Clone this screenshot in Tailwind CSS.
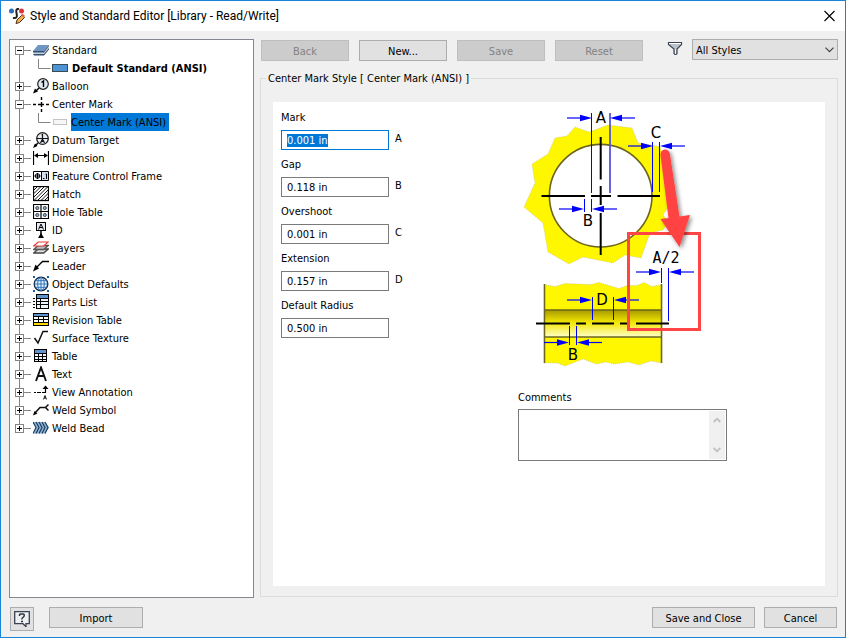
<!DOCTYPE html>
<html lang="en">
<head>
  <meta charset="UTF-8">
  <meta name="viewport" content="width=device-width, initial-scale=1.0">
  <title>Style and Standard Editor</title>
  <script src="https://cdn.jsdelivr.net/npm/@tailwindcss/browser@4"></script>
</head>
<body class="flex flex-col min-h-screen border border-[#1883d7] bg-[#f0f0f0] font-['DejaVu_Sans_Condensed','DejaVu_Sans',sans-serif] text-[11px] leading-4 text-black">

  <!-- Shared shapes -->
  <svg class="hidden">
    <symbol id="minus" viewBox="0 0 23 18">
      <path d="M14 9.500h7" stroke="#848484"/>
      <rect x="5.500" y="5.500" width="8" height="8" fill="#fff" stroke="#848484"/>
      <path d="M7 9.500h5" stroke="#000"/>
    </symbol>
    <symbol id="plus" viewBox="0 0 23 18">
      <path d="M9.500 0v18M14 9.500h7" stroke="#848484"/>
      <rect x="5.500" y="5.500" width="8" height="8" fill="#fff" stroke="#848484"/>
      <path d="M7 9.500h5M9.500 7v5" stroke="#000"/>
    </symbol>
    <symbol id="plus-last" viewBox="0 0 23 18">
      <path d="M9.500 0v6M14 9.500h7" stroke="#848484"/>
      <rect x="5.500" y="5.500" width="8" height="8" fill="#fff" stroke="#848484"/>
      <path d="M7 9.500h5M9.500 7v5" stroke="#000"/>
    </symbol>
    <symbol id="elbow" viewBox="0 0 42 18">
      <path d="M9.500 0v18M28.500 0v9.500h12" fill="none" stroke="#848484"/>
    </symbol>
    <!-- arrow heads with their tails, tip at 0,0 -->
    <symbol id="arrow-r" viewBox="-25 -4 25 8" overflow="visible">
      <path d="M-25 0h14" stroke="#00f" stroke-width="1.200"/>
      <path d="M0 0l-12 -3.200v6.400z" fill="#00f"/>
    </symbol>
    <symbol id="arrow-l" viewBox="0 -4 25 8" overflow="visible">
      <path d="M25 0h-14" stroke="#00f" stroke-width="1.200"/>
      <path d="M0 0l12 -3.200v6.400z" fill="#00f"/>
    </symbol>
  </svg>

  <!-- Title bar -->
  <header class="flex items-center h-[30px] pl-2 pr-[9px] bg-white">
    <svg class="w-4 h-4 mr-[5px]" viewBox="0 0 16 16">
      <circle cx="2.500" cy="3" r="2.500" fill="#2a6fb5"/>
      <circle cx="12.500" cy="3" r="2.500" fill="#d9363e"/>
      <path d="M10 1C7.500 .5 6.800 2 7.500 5s1 5.500-3.500 5" fill="none" stroke="#222" stroke-width="2"/>
      <path d="M7 15.500l1-3.500 5-5 2.500 2.500-5 5z" fill="#f4b04a" stroke="#4a2c12"/>
      <path d="M12 7l1.500-1.500 2.500 2.500-1.500 1.500z" fill="#d86a50"/>
    </svg>
    <h1 class="font-['Roboto',sans-serif] text-[12px]">Style and Standard Editor [Library - Read/Write]</h1>
    <button type="button" aria-label="Close" class="ml-auto">
      <svg class="w-[13px] h-[13px]" viewBox="0 0 13 13"><path d="M1.500 1l10 10M11.500 1l-10 10" stroke="#000" stroke-width="1.100"/></svg>
    </button>
  </header>

  <main class="flex grow gap-[6px] pt-2 pl-2 pr-[7px]">
    <!-- Style tree -->
    <nav class="w-[245px] shrink-0 pt-px border border-[#828790] bg-white">
      <ul class="[&_span]:pt-0.5">
        <li>
          <div class="flex items-center h-[18px]">
            <svg class="w-[23px] h-[18px]"><path d="M9.500 13v5" stroke="#848484"/><use href="#minus"/></svg>
            <svg class="w-4 h-4 mr-[3px]" viewBox="0 0 16 16">
              <path d="M0 9l5-6h11l-5 6z" fill="#6d96c4"/>
              <path d="M0 9h11l5-6v3l-5 7H1z" fill="#c9d3de"/>
              <path d="M11 9l5-6v1l-5 6.500H0V9zM0 12h11l5-6v1.500L11 13.500H1z" fill="#33506f"/>
            </svg>
            <span>Standard</span>
          </div>
          <ul>
            <li class="flex items-center h-[18px]">
              <svg class="w-[42px] h-[18px]"><use href="#elbow"/></svg>
              <svg class="w-4 h-4 mr-[4px]" viewBox="0 0 16 16"><rect x=".5" y="4.500" width="15" height="7" fill="#4d94d6" stroke="#3a4a50"/></svg>
              <span class="font-bold">Default Standard (ANSI)</span>
            </li>
          </ul>
        </li>
        <li class="flex items-center h-[18px]">
          <svg class="w-[23px] h-[18px]"><use href="#plus"/></svg>
          <svg class="w-4 h-4 mr-[3px]" viewBox="0 0 16 16">
            <circle cx="10" cy="6" r="5.300" fill="#dfe9f3" stroke="#222" stroke-width="1.200"/>
            <path d="M8.500 4.500L10.500 3v6" fill="none" stroke="#000" stroke-width="1.400"/>
            <path d="M6 10l-3 3" stroke="#000" stroke-width="1.400"/><path d="M0 15.500l2-5 3 3z"/>
          </svg>
          <span>Balloon</span>
        </li>
        <li>
          <div class="flex items-center h-[18px]">
            <svg class="w-[23px] h-[18px]"><path d="M9.500 0v18" stroke="#848484"/><use href="#minus"/></svg>
            <svg class="w-4 h-4 mr-[3px]" viewBox="0 0 16 16"><path d="M0 8.500h3M5 8.500h6M13 8.500h3M8.500 1v3M8.500 6v5M8.500 13v3" stroke="#000" stroke-width="1.400"/></svg>
            <span>Center Mark</span>
          </div>
          <ul>
            <li class="flex items-center h-[18px]">
              <svg class="w-[42px] h-[18px]"><use href="#elbow"/></svg>
              <svg class="w-4 h-4 mr-[3px]" viewBox="0 0 16 16"><rect x="1.500" y="5.500" width="13" height="5" fill="#f6f6f6" stroke="#c4c4c4"/></svg>
              <span class="pr-[3px] bg-[#0078d7]">Center Mark (ANSI)</span>
            </li>
          </ul>
        </li>
        <li class="flex items-center h-[18px]">
          <svg class="w-[23px] h-[18px]"><use href="#plus"/></svg>
          <svg class="w-4 h-4 mr-[3px]" viewBox="0 0 16 16">
            <circle cx="9.500" cy="6.500" r="5.800" fill="#e8eef4" stroke="#222" stroke-width="1.300"/>
            <path d="M4 6.500h11M8.500 3l1-.5v4M7.500 11l2-4 2 4M8 9.500h3" fill="none" stroke="#111" stroke-width="1.200"/>
            <path d="M5 11l-3 3" stroke="#000" stroke-width="1.400"/><path d="M0 16l2-4.500 2.500 2.500z"/>
          </svg>
          <span>Datum Target</span>
        </li>
        <li class="flex items-center h-[18px]">
          <svg class="w-[23px] h-[18px]"><use href="#plus"/></svg>
          <svg class="w-4 h-4 mr-[3px]" viewBox="0 0 16 16"><path d="M.5 1v14M15.500 1v14M2 5.500h12" stroke="#000" stroke-width="1.200"/><path d="M1 5.500l4-2.500v5zM15 5.500l-4-2.500v5z"/></svg>
          <span>Dimension</span>
        </li>
        <li class="flex items-center h-[18px]">
          <svg class="w-[23px] h-[18px]"><use href="#plus"/></svg>
          <svg class="w-4 h-4 mr-[3px]" viewBox="0 0 16 16">
            <path d="M.5 3.500h15v9H.5zM8.500 3.500v9" fill="#fff" stroke="#000"/>
            <path d="M9 4h6v8H9z" fill="#cfe0f2"/>
            <circle cx="4.500" cy="8" r="2.300" fill="none" stroke="#000"/><path d="M1.500 8h6M4.500 5v6M10 10.500h1.500M12.500 6h1v5" fill="none" stroke="#000"/>
          </svg>
          <span>Feature Control Frame</span>
        </li>
        <li class="flex items-center h-[18px]">
          <svg class="w-[23px] h-[18px]"><use href="#plus"/></svg>
          <svg class="w-4 h-4 mr-[3px]" viewBox="0 0 16 16"><rect x=".5" y=".5" width="15" height="14" fill="#fff" stroke="#000" stroke-width="1.300"/><path d="M1 4l3.500-3.500M1 7.500l7-7M1 11l10.500-10.500M1 14.500l14-14M4.500 14.500L15.500 3.500M8 14.500L15.500 7M11.500 14.500l4-4" stroke="#111"/></svg>
          <span>Hatch</span>
        </li>
        <li class="flex items-center h-[18px]">
          <svg class="w-[23px] h-[18px]"><use href="#plus"/></svg>
          <svg class="w-4 h-4 mr-[3px]" viewBox="0 0 16 16">
            <path d="M.5 .5h15v14H.5zM8 .5v14M.5 7.500h15" fill="#fff" stroke="#000" stroke-width="1.200"/>
            <g fill="#7ea6d0" stroke="#333" stroke-width=".8"><circle cx="4.300" cy="4" r="1.600"/><circle cx="11.800" cy="4" r="1.600"/><circle cx="4.300" cy="11" r="1.600"/><circle cx="11.800" cy="11" r="1.600"/></g>
          </svg>
          <span>Hole Table</span>
        </li>
        <li class="flex items-center h-[18px]">
          <svg class="w-[23px] h-[18px]"><use href="#plus"/></svg>
          <svg class="w-4 h-4 mr-[3px]" viewBox="0 0 16 16">
            <rect x="3.500" y=".5" width="9" height="8" fill="#e4eaf2" stroke="#000"/>
            <path d="M5.500 7.500L8 2l2.500 5.500M6.500 5.500h3" fill="none" stroke="#000"/>
            <path d="M8 9v4" stroke="#000" stroke-width="1.500"/><path d="M8 11l3 5H5z"/>
          </svg>
          <span>ID</span>
        </li>
        <li class="flex items-center h-[18px]">
          <svg class="w-[23px] h-[18px]"><use href="#plus"/></svg>
          <svg class="w-4 h-4 mr-[3px]" viewBox="0 0 16 16">
            <path d="M.7 13l4.500-4h10l-4.500 4z" fill="#ddd" stroke="#444" stroke-width="1.300"/>
            <path d="M.7 9.500l4.500-4h10l-4.500 4z" fill="#bbb" stroke="#555" stroke-width="1.300"/>
            <path d="M.7 6l4.500-4h10l-4.500 4z" fill="#fff" stroke="#ee3a3a" stroke-width="1.200"/>
          </svg>
          <span>Layers</span>
        </li>
        <li class="flex items-center h-[18px]">
          <svg class="w-[23px] h-[18px]"><use href="#plus"/></svg>
          <svg class="w-4 h-4 mr-[3px]" viewBox="0 0 16 16"><path d="M16 3.500H9.500l-6 6" fill="none" stroke="#000" stroke-width="1.300"/><path d="M0 13.500l2.500-7L6 10.500z"/></svg>
          <span>Leader</span>
        </li>
        <li class="flex items-center h-[18px]">
          <svg class="w-[23px] h-[18px]"><use href="#plus"/></svg>
          <svg class="w-4 h-4 mr-[3px]" viewBox="0 0 16 16">
            <circle cx="8" cy="8" r="6.800" fill="#eaf3fc" stroke="#1a2f4b" stroke-width="1.400"/>
            <path d="M8 1.500v13M1.500 8h13M2.500 4.700h11M2.500 11.300h11" stroke="#2c74bd"/>
            <ellipse cx="8" cy="8" rx="3.300" ry="6.500" fill="none" stroke="#2c74bd"/>
            <path d="M0 0h2v2H0zM14 0h2v2h-2zM0 14h2v2H0zM14 14h2v2h-2z" fill="#1c60ab"/>
          </svg>
          <span>Object Defaults</span>
        </li>
        <li class="flex items-center h-[18px]">
          <svg class="w-[23px] h-[18px]"><use href="#plus"/></svg>
          <svg class="w-4 h-4 mr-[3px]" viewBox="0 0 16 16">
            <rect x="3.500" y=".5" width="12" height="14" fill="#eef4fb" stroke="#000"/><path d="M4 1h11v3H4z" fill="#5d93cf"/>
            <path d="M3.500 4.500h12M3.500 7.500h12M3.500 10.500h12M7.500 4v11" stroke="#000"/>
            <path d="M0 4.500h2M0 7.500h2M0 10.500h2M0 13.500h2" stroke="#000"/>
          </svg>
          <span>Parts List</span>
        </li>
        <li class="flex items-center h-[18px]">
          <svg class="w-[23px] h-[18px]"><use href="#plus"/></svg>
          <svg class="w-4 h-4 mr-[3px]" viewBox="0 0 16 16">
            <rect x=".5" y="1.500" width="15" height="12" fill="#fff" stroke="#000"/><path d="M1 2h14v2H1z" fill="#5d93cf"/><path d="M1 11h14v2H1z" fill="#ffd800"/>
            <path d="M0 4.500h16M0 7.500h16M0 10.500h16M5.500 4v7M10.500 4v7" stroke="#000"/>
          </svg>
          <span>Revision Table</span>
        </li>
        <li class="flex items-center h-[18px]">
          <svg class="w-[23px] h-[18px]"><use href="#plus"/></svg>
          <svg class="w-4 h-4 mr-[3px]" viewBox="0 0 16 16"><path d="M1.500 8l3.500 5 5-11.500h5" fill="none" stroke="#111" stroke-width="1.500"/></svg>
          <span>Surface Texture</span>
        </li>
        <li class="flex items-center h-[18px]">
          <svg class="w-[23px] h-[18px]"><use href="#plus"/></svg>
          <svg class="w-4 h-4 mr-[3px]" viewBox="0 0 16 16">
            <rect x="1.500" y="1.500" width="12" height="12" fill="#eef4fb" stroke="#000"/><path d="M2 2h11v3H2z" fill="#5d93cf"/>
            <path d="M1.500 5.500h12M1.500 8.500h12M1.500 11.500h12M5.500 5v9M9.500 5v9" stroke="#000"/>
          </svg>
          <span>Table</span>
        </li>
        <li class="flex items-center h-[18px]">
          <svg class="w-[23px] h-[18px]"><use href="#plus"/></svg>
          <svg class="w-4 h-4 mr-[3px]" viewBox="0 0 16 16"><path d="M3 15L8 1.500 13 15M5 10h6" fill="none" stroke="#111" stroke-width="1.900"/></svg>
          <span>Text</span>
        </li>
        <li class="flex items-center h-[18px]">
          <svg class="w-[23px] h-[18px]"><use href="#plus"/></svg>
          <svg class="w-4 h-4 mr-[3px]" viewBox="0 0 16 16"><path d="M1 8.500h2M4 8.500h4M9 8.500h3.500V4" fill="none" stroke="#000" stroke-width="1.200"/><path d="M9.500 5l3-3.500 3 3.500z"/><path d="M10.500 15.500l1.500-4 1.500 4M11 14h2" fill="none" stroke="#000" stroke-width=".9"/></svg>
          <span>View Annotation</span>
        </li>
        <li class="flex items-center h-[18px]">
          <svg class="w-[23px] h-[18px]"><use href="#plus"/></svg>
          <svg class="w-4 h-4 mr-[3px]" viewBox="0 0 16 16"><path d="M2 11l5-5.500h5.500M15.500 2.500l-3 3 3 3" fill="none" stroke="#111" stroke-width="1.500"/><path d="M0 13.500l1.500-4.500 3 2.500z"/></svg>
          <span>Weld Symbol</span>
        </li>
        <li class="flex items-center h-[18px]">
          <svg class="w-[23px] h-[18px]"><use href="#plus-last"/></svg>
          <svg class="w-4 h-4 mr-[3px]" viewBox="0 0 16 16">
            <path d="M0 2h12l4 5.500-4 6H0l3-6z" fill="#8fb4d8"/>
            <path d="M0 2l3 5.500-3 6M3 2l3 5.500-3 6M6 2l3 5.500-3 6M9 2l3 5.500-3 6M12 2l3 5.500-3 6" fill="none" stroke="#1e3d5c" stroke-width="1.200"/>
          </svg>
          <span>Weld Bead</span>
        </li>
      </ul>
    </nav>

    <section class="flex flex-col grow min-w-0">
      <!-- Toolbar -->
      <div class="flex gap-[10px] pl-px">
        <button type="button" disabled class="w-[88px] h-[21px] mt-px pt-0.5 border border-[#bfbfbf] bg-[#ccc] text-[#838383]">Back</button>
        <button type="button" class="w-[88px] h-[21px] mt-px pt-0.5 border border-[#adadad] bg-[#e1e1e1]">New...</button>
        <button type="button" disabled class="w-[88px] h-[21px] mt-px pt-0.5 border border-[#bfbfbf] bg-[#ccc] text-[#838383]">Save</button>
        <button type="button" disabled class="w-[88px] h-[21px] mt-px pt-0.5 border border-[#bfbfbf] bg-[#ccc] text-[#838383]">Reset</button>
        <div class="flex items-start gap-[9px] ml-auto">
          <svg class="w-4 h-4 mt-px" viewBox="0 0 16 16">
            <path d="M1.500 2.500h13v2L10 9v4.500l-1 1H8l-1-1V9L1.500 4.500z" fill="#bcc2ca" stroke="#3c4350" stroke-width="1.200"/>
            <path d="M2 3h12v1H2z" fill="#fff"/><path d="M8.500 9v5" stroke="#f4f6f8"/>
          </svg>
          <div class="relative">
            <select aria-label="Style filter" class="w-[146px] h-[21px] pl-[3px] pt-0.5 appearance-none border border-[#adadad] bg-[#e1e1e1]">
              <option>All Styles</option>
            </select>
            <svg class="absolute right-1 top-2 w-[9px] h-[6px] pointer-events-none" viewBox="0 0 9 6"><path d="M.5 .7l4 4 4-4" fill="none" stroke="#444" stroke-width="1.200"/></svg>
          </div>
        </div>
      </div>

      <!-- Center mark settings -->
      <fieldset class="flex grow mt-2 mb-px px-3 pt-[15px] pb-[10px] border border-[#dcdcdc]">
        <legend class="-ml-[7px] pt-0.5 px-[2px]">Center Mark Style [ Center Mark (ANSI) ]</legend>
        <div class="flex grow pl-2 bg-white">
          <div class="flex flex-col gap-[6px] w-[237px] shrink-0 pt-2">
            <div>
              <label for="mark" class="block mb-1">Mark</label>
              <div class="flex gap-[6px]">
                <input id="mark" type="text" value="0.001 in" class="w-[108px] h-5 px-[5px] border border-[#7a7a7a] bg-white outline-none focus:border-[#0078d7] selection:bg-[#0078d7] selection:text-white">
                <span class="leading-[18px]">A</span>
              </div>
            </div>
            <div>
              <label for="gap" class="block mt-px mb-1">Gap</label>
              <div class="flex gap-[6px]">
                <input id="gap" type="text" value="0.118 in" class="w-[108px] h-5 px-[5px] border border-[#7a7a7a] bg-white outline-none focus:border-[#0078d7]">
                <span class="leading-[18px]">B</span>
              </div>
            </div>
            <div>
              <label for="overshoot" class="block mt-px mb-1">Overshoot</label>
              <div class="flex gap-[6px]">
                <input id="overshoot" type="text" value="0.001 in" class="w-[108px] h-5 px-[5px] border border-[#7a7a7a] bg-white outline-none focus:border-[#0078d7]">
                <span class="leading-[18px]">C</span>
              </div>
            </div>
            <div>
              <label for="extension" class="block mt-px mb-1">Extension</label>
              <div class="flex gap-[6px]">
                <input id="extension" type="text" value="0.157 in" class="w-[108px] h-5 px-[5px] border border-[#7a7a7a] bg-white outline-none focus:border-[#0078d7]">
                <span class="leading-[18px]">D</span>
              </div>
            </div>
            <div>
              <label for="radius" class="block mt-px mb-1">Default Radius</label>
              <input id="radius" type="text" value="0.500 in" class="w-[108px] h-5 px-[5px] border border-[#7a7a7a] bg-white outline-none focus:border-[#0078d7]">
            </div>
          </div>

          <div>
            <svg class="w-[190px] h-[287px]" viewBox="518 102 190 287" font-family="DejaVu Sans, sans-serif" font-size="15" text-anchor="middle">
              <defs>
                <linearGradient id="bore" x2="0" y2="1">
                  <stop offset="0" stop-color="#a89a00"/><stop offset=".45" stop-color="#f2e600"/><stop offset="1" stop-color="#ffffc8"/>
                </linearGradient>
                <filter id="shadow" x="-50%" y="-20%" width="200%" height="140%"><feDropShadow dx="2" dy="2" stdDeviation="2" flood-opacity=".45"/></filter>
              </defs>
              <!-- plate with hole -->
              <path d="M567 136l8-9 14 5 19-7 24 3 6 15 14 2 8 2 5 20 4 20-1 20-5 8 5 7-5 8-13 3-9 25-16-3-12 8-30-6-14 7-21-12-5-29-19-16 11-24-3-19 16-10 7-16z" fill="#fff700" stroke="#b8b890" stroke-width=".6" stroke-dasharray="1 1"/>
              <circle cx="600.700" cy="195.700" r="51.300" fill="#fff" stroke="#6b6520" stroke-width="1.600"/>
              <path d="M600.700 137v42.500M600.700 186v19M600.700 213v42M541.500 196H585M591 196h20M617.500 196H660" stroke="#000" stroke-width="2"/>
              <path d="M591.500 113v80M652.500 142v50M659.500 142v50M584.500 199v13M591.500 199v13" stroke="#00f"/>
              <path d="M610 113v80" stroke="#5555e0" stroke-width="1.800"/>
              <use href="#arrow-r" x="567" y="114" width="25" height="8"/>
              <use href="#arrow-l" x="610" y="114" width="25" height="8"/>
              <use href="#arrow-r" x="628" y="142" width="25" height="8"/>
              <use href="#arrow-l" x="660" y="142" width="25" height="8"/>
              <use href="#arrow-r" x="559" y="205" width="25" height="8"/>
              <use href="#arrow-l" x="592" y="205" width="25" height="8"/>
              <text x="601" y="123">A</text>
              <text x="656" y="138">C</text>
              <text x="588" y="226">B</text>
              <!-- side section -->
              <path d="M544 284.500l11 2 10-3 26 1 8-2 20 6 8-3 10 0 7-3 8 4 10-2V363l-11-2-12 4-11-3-14 2-8-2-10 2-13-5-18 7-8-3-13 0z" fill="#fff700" stroke="#b8b890" stroke-width=".6" stroke-dasharray="1 1"/>
              <path d="M544 310h118v27H544z" fill="url(#bore)"/>
              <path d="M544 310h118M544 337h118M544.500 284v79M661.500 284v79" stroke="#6b6520" stroke-width="1.500"/>
              <path d="M536 323.500h34M576 323.500h10M592 323.500h22M620 323.500h10M636 323.500h33" stroke="#000" stroke-width="2"/>
              <path d="M592.500 297v23M613.500 297v23M569.500 326v19M576.500 326v19M661.500 268v15M668.500 268v53" stroke="#00f"/>
              <use href="#arrow-r" x="567" y="296" width="25" height="8"/>
              <use href="#arrow-l" x="614" y="296" width="25" height="8"/>
              <use href="#arrow-r" x="544" y="338.500" width="25" height="8"/>
              <use href="#arrow-l" x="577" y="338.500" width="25" height="8"/>
              <use href="#arrow-r" x="636" y="268" width="25" height="8"/>
              <use href="#arrow-l" x="669" y="268" width="25" height="8"/>
              <text x="602" y="305">D</text>
              <text x="573" y="360">B</text>
              <text x="666" y="263" font-family="DejaVu Sans Mono, monospace">A/2</text>
              <!-- callout -->
              <rect x="628.500" y="233.500" width="71" height="96" fill="none" stroke="#ff4545" stroke-width="3"/>
              <path d="M660.500 155a4.700 4.700 0 0 1 9.300-1.500L679.500 216.500l10.500-1.500-10.500 32-19-28 8-1z" fill="#ff4343" filter="url(#shadow)"/>
            </svg>
            <label for="comments" class="block mt-px mb-[3px]">Comments</label>
            <div class="flex w-[209px] h-[52px] p-px border border-[#7a7a7a]">
              <textarea id="comments" class="grow min-w-0 resize-none overflow-hidden outline-none"></textarea>
              <div class="flex flex-col justify-between items-center w-4 py-[6px] bg-[#f0f0f0]">
                <button type="button" aria-label="Scroll up"><svg class="w-2 h-[6px]" viewBox="0 0 8 6"><path d="M.7 5L4 1.700 7.300 5" fill="none" stroke="#bfbfbf" stroke-width="1.800"/></svg></button>
                <button type="button" aria-label="Scroll down"><svg class="w-2 h-[6px]" viewBox="0 0 8 6"><path d="M.7 1L4 4.300 7.300 1" fill="none" stroke="#bfbfbf" stroke-width="1.800"/></svg></button>
              </div>
            </div>
          </div>
        </div>
      </fieldset>
    </section>
  </main>

  <!-- Dialog buttons -->
  <footer class="flex items-start pt-[9px] pb-[6px] pl-[9px] pr-2">
    <button type="button" aria-label="Help" class="flex items-center justify-center w-6 h-6 border border-[#adadad] bg-[#e1e1e1]">
      <svg class="w-4 h-4" viewBox="0 0 16 16">
        <path d="M.7 .7h14.600v12H12v3l-3-3H.7z" fill="#eef0f3" stroke="#3c4350" stroke-width="1.300"/>
        <path d="M5.500 5V4q0-1 1-1h2.500q1.300 0 1.300 1.300T9 6.300 8 8.500M7 10.500h2" fill="none" stroke="#30343c" stroke-width="1.500"/>
      </svg>
    </button>
    <button type="button" class="w-[94px] h-[21px] ml-[15px] pt-0.5 border border-[#adadad] bg-[#e1e1e1]">Import</button>
    <button type="button" class="w-[103px] h-[21px] ml-auto pt-0.5 border border-[#adadad] bg-[#e1e1e1]">Save and Close</button>
    <button type="button" class="w-[73px] h-[21px] ml-[9px] pt-0.5 border border-[#adadad] bg-[#e1e1e1]">Cancel</button>
  </footer>

  <script>
    // Start with the first value selected
    const mark = document.getElementById('mark');
    mark.focus();
    mark.select();
  </script>
</body>
</html>
